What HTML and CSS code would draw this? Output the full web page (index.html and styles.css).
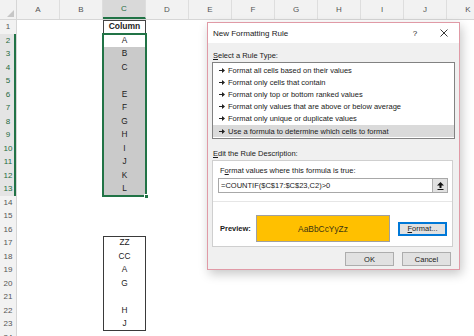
FILE: index.html
```html
<!DOCTYPE html>
<html lang="en">
<head>
  <meta charset="UTF-8">
  <title>New Formatting Rule</title>
  <link rel="stylesheet" href="styles.css">
</head>
<body>
  <div class="sheet">
    <div class="col-heads">
      <div class="corner"></div>
      <div class="ch">A</div>
      <div class="ch">B</div>
      <div class="ch on">C</div>
      <div class="ch">D</div>
      <div class="ch">E</div>
      <div class="ch">F</div>
      <div class="ch">G</div>
      <div class="ch">H</div>
      <div class="ch">I</div>
      <div class="ch">J</div>
      <div class="ch">K</div>
    </div>

    <div class="grid">
      <div class="row-heads">
        <div class="rh">1</div>
        <div class="rh on">2</div>
        <div class="rh on">3</div>
        <div class="rh on">4</div>
        <div class="rh on">5</div>
        <div class="rh on">6</div>
        <div class="rh on">7</div>
        <div class="rh on">8</div>
        <div class="rh on">9</div>
        <div class="rh on">10</div>
        <div class="rh on">11</div>
        <div class="rh on">12</div>
        <div class="rh on">13</div>
        <div class="rh">14</div>
        <div class="rh">15</div>
        <div class="rh">16</div>
        <div class="rh">17</div>
        <div class="rh">18</div>
        <div class="rh">19</div>
        <div class="rh">20</div>
        <div class="rh">21</div>
        <div class="rh">22</div>
        <div class="rh">23</div>
        <div class="rh">24</div>
      </div>

      <div class="col"></div>
      <div class="col"></div>
      <div class="col">
        <div class="cell head">Column</div>
        <div class="range">
          <div class="cell active">A</div>
          <div class="cell">B</div>
          <div class="cell">C</div>
          <div class="cell"></div>
          <div class="cell">E</div>
          <div class="cell">F</div>
          <div class="cell">G</div>
          <div class="cell">H</div>
          <div class="cell">I</div>
          <div class="cell">J</div>
          <div class="cell">K</div>
          <div class="cell">L</div>
          <span class="handle"></span>
        </div>
        <div class="cell"></div>
        <div class="cell"></div>
        <div class="cell"></div>
        <div class="lookup">
          <div class="cell">ZZ</div>
          <div class="cell">CC</div>
          <div class="cell">A</div>
          <div class="cell">G</div>
          <div class="cell"></div>
          <div class="cell">H</div>
          <div class="cell">J</div>
        </div>
      </div>
    </div>

    <div class="dialog">
      <div class="title">
        <span class="title-text">New Formatting Rule</span>
        <span class="tbtn help">?</span>
        <span class="tbtn close">
          <svg width="8" height="8" viewBox="0 0 8 8"><path d="M0.5 0.5L7.5 7.5M7.5 0.5L0.5 7.5" stroke="#222" stroke-width="0.9"/></svg>
        </span>
      </div>

      <div class="pane">
        <div class="lbl"><u>S</u>elect a Rule Type:</div>
        <div class="list">
          <div class="item"><svg class="arr" width="6" height="5" viewBox="0 0 6 5"><path d="M0 2h3v1H0z M3 0L6 2.5L3 5z" fill="#222"/></svg>Format all cells based on their values</div>
          <div class="item"><svg class="arr" width="6" height="5" viewBox="0 0 6 5"><path d="M0 2h3v1H0z M3 0L6 2.5L3 5z" fill="#222"/></svg>Format only cells that contain</div>
          <div class="item"><svg class="arr" width="6" height="5" viewBox="0 0 6 5"><path d="M0 2h3v1H0z M3 0L6 2.5L3 5z" fill="#222"/></svg>Format only top or bottom ranked values</div>
          <div class="item"><svg class="arr" width="6" height="5" viewBox="0 0 6 5"><path d="M0 2h3v1H0z M3 0L6 2.5L3 5z" fill="#222"/></svg>Format only values that are above or below average</div>
          <div class="item"><svg class="arr" width="6" height="5" viewBox="0 0 6 5"><path d="M0 2h3v1H0z M3 0L6 2.5L3 5z" fill="#222"/></svg>Format only unique or duplicate values</div>
          <div class="item sel"><svg class="arr" width="6" height="5" viewBox="0 0 6 5"><path d="M0 2h3v1H0z M3 0L6 2.5L3 5z" fill="#222"/></svg>Use a formula to determine which cells to format</div>
        </div>

        <div class="lbl lbl-edit"><u>E</u>dit the Rule Description:</div>
        <div class="desc">
          <div class="desc-lbl">F<u>o</u>rmat values where this formula is true:</div>
          <div class="formula">
            <span class="formula-text">=COUNTIF($C$17:$C$23,C2)&gt;0</span>
            <span class="pick">
              <svg width="7" height="8" viewBox="0 0 7 8"><path d="M3.5 0L7 3.5H4.5V6H2.5V3.5H0z" fill="#111"/><rect x="0.5" y="7" width="6" height="1" fill="#111"/></svg>
            </span>
          </div>
          <div class="sep"></div>
          <div class="preview">
            <span class="pv-lbl">Preview:</span>
            <span class="swatch">AaBbCcYyZz</span>
            <span class="btn fmt"><u>F</u>ormat...</span>
          </div>
        </div>

        <div class="actions">
          <span class="btn">OK</span>
          <span class="btn">Cancel</span>
        </div>
      </div>
    </div>
  </div>
</body>
</html>
```

FILE: styles.css
```css
* { box-sizing: border-box; }
body {
  margin: 0;
  background: #fff;
  font-family: 'Liberation Sans', Arial, sans-serif;
  color: #222;
  overflow: hidden;
}
.sheet {
  position: relative;
  width: 474px;
  height: 336px;
  overflow: hidden;
}

/* column + row headers */
.col-heads {
  display: flex;
  height: 20px;
  background: #f2f2f2;
  border-bottom: 1px solid #d6d6d6;
}
.corner {
  position: relative;
  width: 17px;
  flex: none;
  border-right: 1px solid #d6d6d6;
}
.corner::after {
  content: "";
  position: absolute;
  right: 2px; bottom: 2px;
  border-left: 7px solid transparent;
  border-bottom: 7px solid #c6c6c6;
}
.ch {
  width: 43px;
  flex: none;
  display: flex;
  align-items: center;
  justify-content: center;
  border-right: 1px solid #dedede;
  font-size: 8px;
  color: #555;
}
.ch.on {
  background: #d9d9d9;
  border-bottom: 2px solid #217346;
  color: #1f6b41;
}
.grid { display: flex; }
.row-heads {
  width: 17px;
  flex: none;
  background: #f2f2f2;
  border-right: 1px solid #d6d6d6;
}
.rh {
  height: 13.5px;
  line-height: 13.5px;
  text-align: center;
  font-size: 8px;
  color: #555;
}
.rh.on {
  background: #e4e4e4;
  box-shadow: inset -2px 0 #217346;
  color: #1f6b41;
}

/* column C */
.col { width: 43px; flex: none; }
.cell {
  height: 13.5px;
  line-height: 13.5px;
  text-align: center;
  font-size: 8.3px;
  color: #1c1c1c;
}
.cell.head {
  font-weight: bold;
  font-size: 8.5px;
  outline: 1px solid #444;
  outline-offset: -1px;
}
.range {
  position: relative;
  outline: 2px solid #217346;
  outline-offset: -1px;
}
.range .cell { background: #cacaca; }
.range .cell.active { background: #fff; }
.handle {
  position: absolute;
  right: -3px; bottom: -3px;
  width: 5px; height: 5px;
  background: #217346;
  border: 1px solid #fff;
}
.lookup {
  outline: 1px solid #3a3a3a;
  outline-offset: -1px;
}

/* dialog */
.dialog {
  position: absolute;
  left: 207px; top: 22px;
  width: 253px; height: 248px;
  border: 1px solid #e09aa6;
  background: #f0f0f0;
  box-shadow: 2px 4px 10px rgba(0,0,0,0.22);
  font-size: 7.5px;
  color: #1a1a1a;
}
.title {
  display: flex;
  align-items: center;
  height: 20px;
  padding-left: 5px;
  background: #fff;
  font-size: 8px;
}
.title-text { flex: 1; }
.tbtn {
  display: flex;
  align-items: center;
  justify-content: center;
  height: 20px;
}
.help { width: 28px; font-size: 8px; }
.close { width: 30px; }
.pane { padding: 0 4px; }
.lbl {
  height: 12px;
  line-height: 12px;
  margin-top: 7px;
  padding-left: 1px;
}
.lbl-edit { margin-top: 9px; }
.list {
  height: 77px;
  padding-top: 1px;
  border: 1px solid #828282;
  background: #fff;
}
.item {
  display: flex;
  align-items: center;
  gap: 3px;
  height: 12.2px;
  padding-left: 6px;
}
.item.sel { background: #dadada; }
.arr { flex: none; }
.desc {
  width: 241px;
  height: 87px;
  border: 1px solid #cfcfcf;
  background: #fff;
}
.desc-lbl {
  height: 12px;
  line-height: 12px;
  margin-top: 4px;
  padding-left: 7px;
}
.formula {
  display: flex;
  align-items: center;
  width: 230px;
  height: 15px;
  margin: 1px 0 0 5px;
  border: 1px solid #a8a8a8;
}
.formula-text { flex: 1; padding-left: 2px; }
.pick {
  display: flex;
  align-items: center;
  justify-content: center;
  width: 15px;
  height: 13px;
  background: #e1e1e1;
  border-left: 1px solid #adadad;
}
.sep {
  margin-top: 8px;
  border-top: 1px solid #e6e6e6;
}
.preview {
  display: flex;
  align-items: center;
  margin-top: 13px;
  height: 27px;
  padding-left: 7px;
}
.pv-lbl { width: 36px; font-weight: bold; }
.swatch {
  display: flex;
  align-items: center;
  justify-content: center;
  width: 134px;
  height: 27px;
  background: #ffc000;
  border: 1px solid #a0a0a0;
  font-size: 8.4px;
  color: #3b3413;
}
.btn {
  display: flex;
  align-items: center;
  justify-content: center;
  width: 49px;
  height: 14px;
  background: #e1e1e1;
  border: 1px solid #adadad;
}
.btn.fmt {
  margin-left: 8px;
  border-color: #0078d7;
  box-shadow: inset 0 0 0 1px #0078d7;
}
.actions {
  display: flex;
  justify-content: flex-end;
  gap: 8px;
  margin-top: 5px;
  padding-right: 4px;
}
```
